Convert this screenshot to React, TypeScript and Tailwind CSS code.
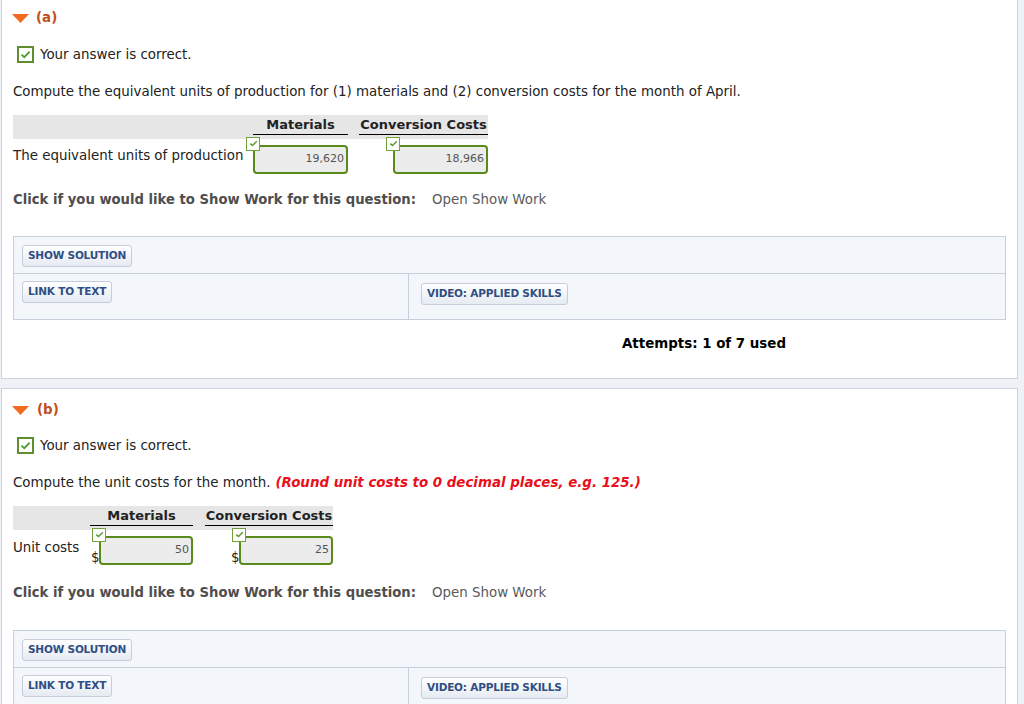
import React from "react";

function Triangle() {
  return (
    <svg width="17" height="9" viewBox="0 0 17 9" className="ml-[-1px]">
      <path d="M0 0 L17 0 L8.5 9 Z" fill="#f26a1f" />
    </svg>
  );
}

function BigCheck() {
  return (
    <span className="inline-flex w-[17px] h-[17px] border-2 border-[#5e8e2e] bg-white items-center justify-center">
      <svg width="11" height="9" viewBox="0 0 11 9">
        <path d="M1.5 4.6 L4.3 7.2 L9.6 1.6" stroke="#4f9a2c" strokeWidth="1.8" fill="none" />
      </svg>
    </span>
  );
}

function SmallCheck() {
  return (
    <span className="inline-flex w-[14px] h-[14px] border border-[#72a03c] bg-white items-center justify-center">
      <svg width="9" height="7" viewBox="0 0 9 7">
        <path d="M1.2 3.6 L3.5 5.6 L7.8 1.2" stroke="#5a9a2e" strokeWidth="1.4" fill="none" />
      </svg>
    </span>
  );
}

function Input({ value, w }: { value: string; w: string }) {
  return (
    <div
      className={`relative ${w} h-[29px] border-2 border-[#5a891c] rounded-[4px] bg-[#ececec] flex items-center justify-end pr-[2px] text-[11px] text-[#555]`}
    >
      {value}
      <span className="absolute left-[-9px] top-[-11px]">
        <SmallCheck />
      </span>
    </div>
  );
}

function Btn({ children }: { children: React.ReactNode }) {
  return (
    <div className="inline-flex h-[22px] items-center px-[5px] border border-[#c4cdd9] rounded-[3px] bg-linear-to-b from-white to-[#e6ebf2] text-[10.5px] font-bold text-[#2f4e85] tracking-[-0.2px] whitespace-nowrap">
      {children}
    </div>
  );
}

function LinksBox() {
  return (
    <div className="w-[993px] border border-[#c6cfdb] bg-[#f3f6fa]">
      <div className="h-[37px] border-b border-[#c6cfdb] pl-[8px] pt-[8px]">
        <Btn>SHOW SOLUTION</Btn>
      </div>
      <div className="flex h-[45px]">
        <div className="w-[395px] border-r border-[#c6cfdb] pl-[8px] pt-[7px]">
          <Btn>LINK TO TEXT</Btn>
        </div>
        <div className="pl-[12px] pt-[9px]">
          <Btn>VIDEO: APPLIED SKILLS</Btn>
        </div>
      </div>
    </div>
  );
}

function ShowWork({ mt }: { mt: string }) {
  return (
    <div className={`${mt} h-[20px] flex items-center whitespace-nowrap`}>
      <span className="font-bold text-[#4e4e4e] text-[13.2px]">Click if you would like to Show Work for this question:</span>
      <span className="ml-[16px] text-[#5a5a5a]">Open Show Work</span>
    </div>
  );
}

function Correct({ mt }: { mt: string }) {
  return (
    <div className={`${mt} h-[20px] flex items-center`}>
      <span className="ml-[4px]">
        <BigCheck />
      </span>
      <span className="ml-[6px]">Your answer is correct.</span>
    </div>
  );
}

function HeadCell({ w, children }: { w: string; children: React.ReactNode }) {
  return (
    <div className={`${w} h-[20px] border-b border-black flex items-center justify-center font-bold text-[13px] whitespace-nowrap`}>
      {children}
    </div>
  );
}

export default function App() {
  return (
    <div className="w-[1024px] h-[704px] overflow-hidden bg-[#eef2f7] font-['DejaVu_Sans',Verdana,sans-serif] text-[13.4px] text-[#222]">
      {/* Panel (a) */}
      <div className="ml-[1px] w-[1017px] h-[379px] bg-white border-x border-b border-[#ccd3de] pl-[11px]">
        <div className="pt-[8px] h-[28px] flex items-center">
          <Triangle />
          <span className="ml-[7px] font-bold text-[#c14f1d]">(a)</span>
        </div>
        <Correct mt="mt-[17px]" />
        <div className="mt-[17px] h-[20px] flex items-center whitespace-nowrap">
          Compute the equivalent units of production for (1) materials and (2) conversion costs for the month of April.
        </div>
        <div className="mt-[13px]">
          <div className="flex h-[24px] w-[475px] bg-[#e6e6e6]">
            <div className="w-[240px]" />
            <HeadCell w="w-[95px]">Materials</HeadCell>
            <div className="w-[11px]" />
            <HeadCell w="w-[129px]">Conversion Costs</HeadCell>
          </div>
          <div className="flex items-start mt-[6px]">
            <div className="w-[240px] pt-[1px] leading-[20px] whitespace-nowrap">The equivalent units of production</div>
            <Input value="19,620" w="w-[95px]" />
            <div className="w-[45px]" />
            <Input value="18,966" w="w-[95px]" />
          </div>
        </div>
        <ShowWork mt="mt-[16px]" />
        <div className="mt-[26px]">
          <LinksBox />
        </div>
        <div className="mt-[14px] h-[20px] flex items-center ml-[609px] font-bold text-black">
          Attempts: 1 of 7 used
        </div>
      </div>

      {/* Panel (b) */}
      <div className="mt-[9px] ml-[1px] w-[1017px] h-[400px] bg-white border border-[#ccd3de] pl-[11px]">
        <div className="pt-[11px] h-[31px] flex items-center">
          <Triangle />
          <span className="ml-[8px] font-bold text-[#c14f1d]">(b)</span>
        </div>
        <Correct mt="mt-[16px]" />
        <div className="mt-[17px] h-[20px] flex items-center whitespace-nowrap">
          Compute the unit costs for the month.
          <span className="ml-[5px] font-bold italic text-[#e8101a]">
            (Round unit costs to 0 decimal places, e.g. 125.)
          </span>
        </div>
        <div className="mt-[13px]">
          <div className="flex h-[24px] w-[320px] bg-[#e6e6e6]">
            <div className="w-[77px]" />
            <HeadCell w="w-[103px]">Materials</HeadCell>
            <div className="w-[12px]" />
            <HeadCell w="w-[128px]">Conversion Costs</HeadCell>
          </div>
          <div className="flex items-start mt-[6px]">
            <div className="w-[77px] pt-[2px] leading-[20px] whitespace-nowrap">Unit costs</div>
            <div className="w-[103px] flex items-end pl-[1px]">
              <span className="w-[8px] leading-[16px] mb-[-1px]">$</span>
              <Input value="50" w="w-[94px]" />
            </div>
            <div className="w-[38px]" />
            <div className="flex items-end">
              <span className="w-[8px] leading-[16px] mb-[-1px]">$</span>
              <Input value="25" w="w-[94px]" />
            </div>
          </div>
        </div>
        <ShowWork mt="mt-[18px]" />
        <div className="mt-[27px]">
          <LinksBox />
        </div>
      </div>
    </div>
  );
}
